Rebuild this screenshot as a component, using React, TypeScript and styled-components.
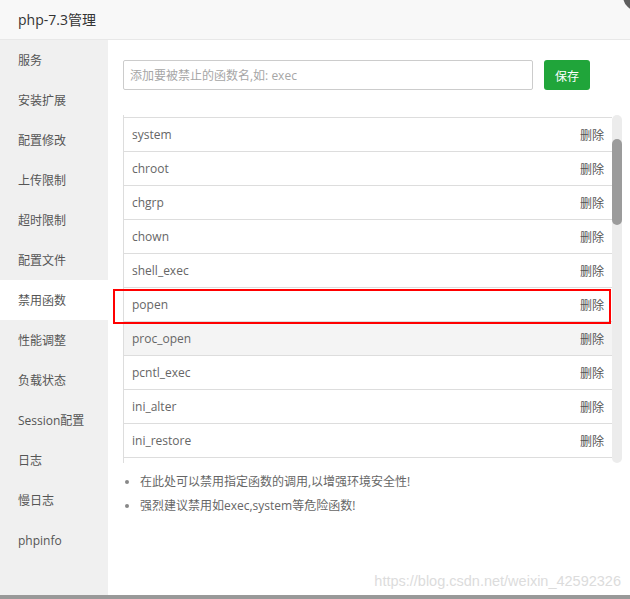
import React, { useEffect, useRef } from "react";
import styled, { createGlobalStyle } from "styled-components";

const GlobalStyle = createGlobalStyle`
  html, body { margin: 0; padding: 0; background: #fff; }
  body { font-family: "Open Sans", "Noto Sans CJK SC", sans-serif; }
  * { box-sizing: border-box; }
`;

const Frame = styled.div`
  position: relative;
  width: 630px;
  height: 599px;
  overflow: hidden;
  display: flex;
  flex-direction: column;
  background: #fff;
`;

const Header = styled.div`
  height: 40px;
  flex: none;
  background: #f8f8f8;
  border-bottom: 1px solid #e8e8e8;
  display: flex;
  align-items: center;
  padding: 0 18px 1px;
  font-size: 14px;
  color: #333;
`;

const CloseDot = styled.div`
  position: absolute;
  right: -23px;
  top: -19px;
  width: 30px;
  height: 30px;
  border-radius: 50%;
  background: #5f5f5f;
`;

const Body = styled.div`
  flex: 1;
  display: flex;
  min-height: 0;
`;

const Sidebar = styled.div`
  width: 108px;
  flex: none;
  background: #f0f0f0;
  display: flex;
  flex-direction: column;
`;

const NavItem = styled.div<{ $active?: boolean }>`
  height: 40px;
  display: flex;
  align-items: center;
  padding-left: 18px;
  font-size: 12px;
  color: #555;
  background: ${(p) => (p.$active ? "#fff" : "transparent")};
`;

const Content = styled.div`
  position: relative;
  flex: 1;
  padding: 20px 0 0 15px;
  display: flex;
  flex-direction: column;
`;

const FormRow = styled.div`
  display: flex;
  align-items: center;
  gap: 11px;
`;

const Input = styled.input`
  width: 410px;
  height: 30px;
  border: 1px solid #ccc;
  border-radius: 2px;
  padding: 0 6px;
  font-family: "Open Sans", "Noto Sans CJK SC", sans-serif;
  font-size: 12px;
  color: #555;
  outline: none;
  &::placeholder { color: #a6a6a6; }
`;

const SaveButton = styled.button`
  width: 46px;
  height: 30px;
  border: none;
  border-radius: 3px;
  background: #20a53a;
  color: #fff;
  font-family: "Noto Sans CJK SC", sans-serif;
  font-size: 12px;
  padding: 0;
`;

const ListWrap = styled.div`
  margin-top: 25px;
  display: flex;
  width: 499px;
  height: 348px;
`;

const ScrollArea = styled.div`
  width: 489px;
  height: 100%;
  overflow: hidden;
`;

const ScrollTrack = styled.div`
  width: 10px;
  height: 100%;
  background: #ececec;
  border-radius: 5px;
  padding-top: 24px;
`;

const ScrollThumb = styled.div`
  width: 10px;
  height: 86px;
  background: #9b9b9b;
  border-radius: 5px;
`;

const Row = styled.div<{ $hover?: boolean }>`
  height: 34px;
  display: flex;
  align-items: center;
  justify-content: space-between;
  padding: 0 8px 0 8px;
  border-left: 1px solid #ddd;
  border-bottom: 1px solid #ddd;
  background: ${(p) => (p.$hover ? "#f4f4f4" : "#fff")};
  font-size: 12px;
  color: #666;
`;

const DeleteLink = styled.span`
  font-family: "Noto Sans CJK SC", sans-serif;
  color: #555;
  font-size: 12px;
`;

const Notes = styled.ul`
  margin: 7px 0 0;
  padding: 0 0 0 17px;
  list-style: none;
`;

const Note = styled.li`
  position: relative;
  line-height: 24px;
  font-size: 12px;
  color: #666;
  &::before {
    content: "";
    position: absolute;
    left: -15px;
    top: 10px;
    width: 4px;
    height: 4px;
    border-radius: 50%;
    background: #888;
  }
`;

const Highlight = styled.div`
  position: absolute;
  left: 5px;
  top: 249px;
  width: 498px;
  height: 35px;
  border: 2px solid #f00;
  pointer-events: none;
`;

const Watermark = styled.div`
  position: absolute;
  right: 9px;
  bottom: 6px;
  font-family: "Liberation Sans", Arial, sans-serif;
  font-size: 14.5px;
  color: #dcdcdc;
`;

const BottomBar = styled.div`
  height: 4px;
  flex: none;
  background: #999;
`;

const navItems = [
  "服务",
  "安装扩展",
  "配置修改",
  "上传限制",
  "超时限制",
  "配置文件",
  "禁用函数",
  "性能调整",
  "负载状态",
  "Session配置",
  "日志",
  "慢日志",
  "phpinfo",
];

const funcs = [
  "passthru",
  "exec",
  "putenv",
  "system",
  "chroot",
  "chgrp",
  "chown",
  "shell_exec",
  "popen",
  "proc_open",
  "pcntl_exec",
  "ini_alter",
  "ini_restore",
  "dl",
  "openlog",
  "syslog",
  "readlink",
  "symlink",
  "popepassthru",
  "pcntl_alarm",
  "pcntl_fork",
  "pcntl_waitpid",
  "pcntl_wait",
  "pcntl_wifexited",
  "pcntl_wifstopped",
  "pcntl_wifsignaled",
  "pcntl_wifcontinued",
  "pcntl_wexitstatus",
  "pcntl_wtermsig",
  "pcntl_wstopsig",
  "pcntl_signal",
  "pcntl_signal_dispatch",
  "pcntl_get_last_error",
  "pcntl_strerror",
  "pcntl_sigprocmask",
  "pcntl_sigwaitinfo",
  "pcntl_sigtimedwait",
  "pcntl_getpriority",
  "pcntl_setpriority",
  "imap_open",
  "apache_setenv",
];

export default function App() {
  const listRef = useRef<HTMLDivElement>(null);
  useEffect(() => {
    if (listRef.current) listRef.current.scrollTop = 99;
  }, []);

  return (
    <>
      <GlobalStyle />
      <Frame>
        <Header>php-7.3管理</Header>
        <CloseDot />
        <Body>
          <Sidebar>
            {navItems.map((n) => (
              <NavItem key={n} $active={n === "禁用函数"}>
                {n}
              </NavItem>
            ))}
          </Sidebar>
          <Content>
            <FormRow>
              <Input placeholder="添加要被禁止的函数名,如: exec" />
              <SaveButton>保存</SaveButton>
            </FormRow>
            <ListWrap>
              <ScrollArea ref={listRef}>
                {funcs.map((f) => (
                  <Row key={f} $hover={f === "proc_open"}>
                    <span>{f}</span>
                    <DeleteLink>删除</DeleteLink>
                  </Row>
                ))}
              </ScrollArea>
              <ScrollTrack>
                <ScrollThumb />
              </ScrollTrack>
            </ListWrap>
            <Notes>
              <Note>在此处可以禁用指定函数的调用,以增强环境安全性!</Note>
              <Note>强烈建议禁用如exec,system等危险函数!</Note>
            </Notes>
            <Highlight />
            <Watermark>https://blog.csdn.net/weixin_42592326</Watermark>
          </Content>
        </Body>
        <BottomBar />
      </Frame>
    </>
  );
}
